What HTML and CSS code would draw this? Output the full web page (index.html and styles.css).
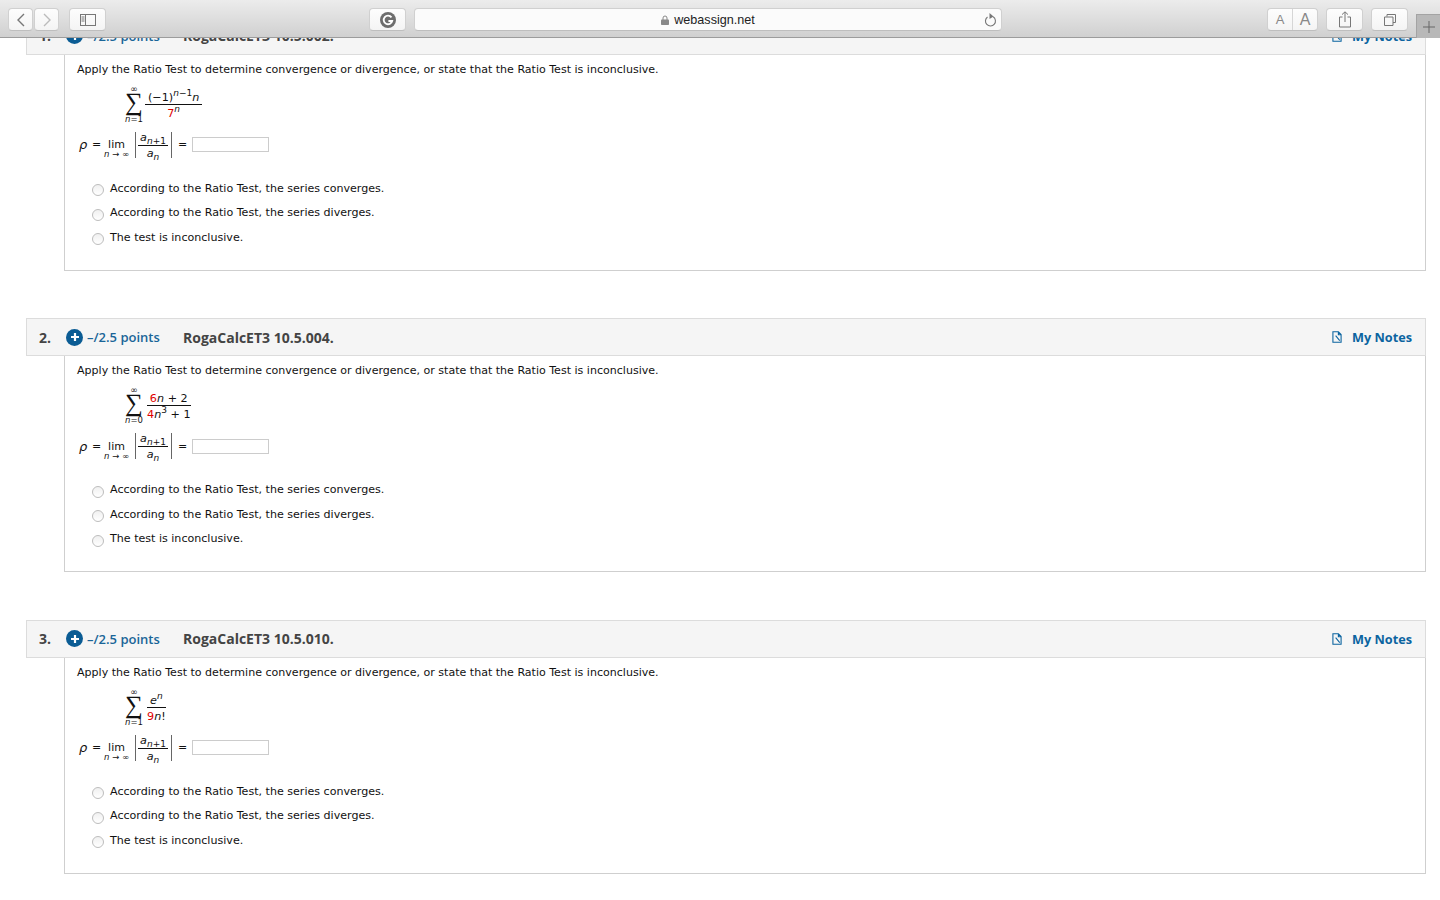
FILE: index.html
```html
<!DOCTYPE html>
<html lang="en">
<head>
<meta charset="utf-8">
<title>webassign.net</title>
<link rel="stylesheet" href="styles.css">
</head>
<body>
<header class="chrome">
  <div class="btn-pair">
    <button class="tb tb-nav"><svg width="10" height="14" viewBox="0 0 10 14"><path d="M8 1 2 7l6 6" fill="none" stroke="#777" stroke-width="1.4"/></svg></button>
    <button class="tb tb-nav"><svg width="10" height="14" viewBox="0 0 10 14"><path d="m2 1 6 6-6 6" fill="none" stroke="#bbb" stroke-width="1.4"/></svg></button>
  </div>
  <button class="tb tb-side"><svg width="16" height="12" viewBox="0 0 16 12"><rect x=".5" y=".5" width="15" height="11" fill="none" stroke="#777"/><path d="M5.5 0v12M1.500 3h3M1.500 5h3M1.500 7h3" stroke="#777" fill="none"/></svg></button>
  <div class="spacer-a"></div>
  <button class="tb tb-side"><svg width="16" height="16" viewBox="0 0 16 16"><circle cx="8" cy="8" r="8" fill="#6d6d6d"/><path d="M11.500 5.400A4.300 4.300 0 1 0 12.200 9H8.400" fill="none" stroke="#fff" stroke-width="1.800"/></svg></button>
  <div class="url">
    <span class="url-center"><svg width="8" height="10" viewBox="0 0 8 10"><path d="M2 5V3a2 2 0 0 1 4 0v2" fill="none" stroke="#888"/><rect y="4.500" width="8" height="5.500" rx=".8" fill="#888"/></svg><span class="url-text">webassign.net</span></span>
    <svg class="reload" width="14" height="14" viewBox="0 0 14 14"><path d="M9.600 3A5 5 0 1 1 4 3.200" transform="translate(.5 .8)" fill="none" stroke="#777" stroke-width="1.100"/><path d="M6.500 0 10.500 3.600 6.500 6z" fill="#777"/></svg>
  </div>
  <div class="spacer-b"></div>
  <div class="font-pair"><span class="font-a">A</span><span class="font-b">A</span></div>
  <button class="tb tb-tool"><svg width="12" height="17" viewBox="0 0 12 17"><path d="M3.500 6H.5v10h11V6h-3M6 11V1M3 3.600 6 .8l3 2.800" fill="none" stroke="#777"/></svg></button>
  <button class="tb tb-tool"><svg width="12" height="12" viewBox="0 0 12 12"><path d="M3 2.500V.5h8.500v8H9M.5 3h8.500v8.500H.5z" fill="none" stroke="#777"/></svg></button>
  <div class="new-tab"><svg width="12" height="12" viewBox="0 0 12 12"><path d="M6 0v12M0 6h12" stroke="#666"/></svg></div>
</header>

<main class="page">
  <section class="question">
    <div class="q-head">
      <span class="q-num">1.</span>
      <span class="plus"><svg width="10" height="10" viewBox="0 0 10 10"><path d="M5 1v8M1 5h8" stroke="#fff" stroke-width="2.200"/></svg></span>
      <span class="q-points">–/2.5 points</span>
      <span class="q-title">RogaCalcET3 10.5.002.</span>
      <span class="notes"><svg width="10" height="12" viewBox="0 0 11 13"><path d="M1 .8h6l3 3v8.400H1zM7 1v3h3M4 5l4.500 5.500" fill="none" stroke="#0b64a0" stroke-width="1.200"/></svg>My Notes</span>
    </div>
    <div class="q-body">
      <p class="prompt">Apply the Ratio Test to determine convergence or divergence, or state that the Ratio Test is inconclusive.</p>
      <div class="series">
        <span class="sum"><span class="lim-top">∞</span><span class="sigma">∑</span><span class="lim-bot"><i>n</i>=1</span></span>
        <span class="frac"><span class="num">(−1)<sup><i>n</i>−1</sup><i>n</i></span><span class="den"><em class="red">7</em><sup><i>n</i></sup></span></span>
      </div>
      <div class="limit">
        <i class="rho">ρ</i><span class="eq">=</span>
        <span class="lim"><span>lim</span><small><i>n</i> → ∞</small></span>
        <span class="abs"><span class="frac frac-r"><span class="num"><i>a</i><sub><i>n</i>+1</sub></span><span class="den"><i>a</i><sub><i>n</i></sub></span></span></span>
        <span class="eq eq-r">=</span>
        <input class="answer" type="text" aria-label="answer">
      </div>
      <label class="choice"><input class="radio" type="radio" name="q1">According to the Ratio Test, the series converges.</label>
      <label class="choice"><input class="radio" type="radio" name="q1">According to the Ratio Test, the series diverges.</label>
      <label class="choice"><input class="radio" type="radio" name="q1">The test is inconclusive.</label>
    </div>
  </section>

  <section class="question">
    <div class="q-head">
      <span class="q-num">2.</span>
      <span class="plus"><svg width="10" height="10" viewBox="0 0 10 10"><path d="M5 1v8M1 5h8" stroke="#fff" stroke-width="2.200"/></svg></span>
      <span class="q-points">–/2.5 points</span>
      <span class="q-title">RogaCalcET3 10.5.004.</span>
      <span class="notes"><svg width="10" height="12" viewBox="0 0 11 13"><path d="M1 .8h6l3 3v8.400H1zM7 1v3h3M4 5l4.500 5.500" fill="none" stroke="#0b64a0" stroke-width="1.200"/></svg>My Notes</span>
    </div>
    <div class="q-body">
      <p class="prompt">Apply the Ratio Test to determine convergence or divergence, or state that the Ratio Test is inconclusive.</p>
      <div class="series">
        <span class="sum"><span class="lim-top">∞</span><span class="sigma">∑</span><span class="lim-bot"><i>n</i>=0</span></span>
        <span class="frac"><span class="num"><em class="red">6</em><i>n</i> + 2</span><span class="den"><em class="red">4</em><i>n</i><sup>3</sup> + 1</span></span>
      </div>
      <div class="limit">
        <i class="rho">ρ</i><span class="eq">=</span>
        <span class="lim"><span>lim</span><small><i>n</i> → ∞</small></span>
        <span class="abs"><span class="frac frac-r"><span class="num"><i>a</i><sub><i>n</i>+1</sub></span><span class="den"><i>a</i><sub><i>n</i></sub></span></span></span>
        <span class="eq eq-r">=</span>
        <input class="answer" type="text" aria-label="answer">
      </div>
      <label class="choice"><input class="radio" type="radio" name="q2">According to the Ratio Test, the series converges.</label>
      <label class="choice"><input class="radio" type="radio" name="q2">According to the Ratio Test, the series diverges.</label>
      <label class="choice"><input class="radio" type="radio" name="q2">The test is inconclusive.</label>
    </div>
  </section>

  <section class="question">
    <div class="q-head">
      <span class="q-num">3.</span>
      <span class="plus"><svg width="10" height="10" viewBox="0 0 10 10"><path d="M5 1v8M1 5h8" stroke="#fff" stroke-width="2.200"/></svg></span>
      <span class="q-points">–/2.5 points</span>
      <span class="q-title">RogaCalcET3 10.5.010.</span>
      <span class="notes"><svg width="10" height="12" viewBox="0 0 11 13"><path d="M1 .8h6l3 3v8.400H1zM7 1v3h3M4 5l4.500 5.500" fill="none" stroke="#0b64a0" stroke-width="1.200"/></svg>My Notes</span>
    </div>
    <div class="q-body">
      <p class="prompt">Apply the Ratio Test to determine convergence or divergence, or state that the Ratio Test is inconclusive.</p>
      <div class="series">
        <span class="sum"><span class="lim-top">∞</span><span class="sigma">∑</span><span class="lim-bot"><i>n</i>=1</span></span>
        <span class="frac"><span class="num"><i>e</i><sup><i>n</i></sup></span><span class="den"><em class="red">9</em><i>n</i>!</span></span>
      </div>
      <div class="limit">
        <i class="rho">ρ</i><span class="eq">=</span>
        <span class="lim"><span>lim</span><small><i>n</i> → ∞</small></span>
        <span class="abs"><span class="frac frac-r"><span class="num"><i>a</i><sub><i>n</i>+1</sub></span><span class="den"><i>a</i><sub><i>n</i></sub></span></span></span>
        <span class="eq eq-r">=</span>
        <input class="answer" type="text" aria-label="answer">
      </div>
      <label class="choice"><input class="radio" type="radio" name="q3">According to the Ratio Test, the series converges.</label>
      <label class="choice"><input class="radio" type="radio" name="q3">According to the Ratio Test, the series diverges.</label>
      <label class="choice"><input class="radio" type="radio" name="q3">The test is inconclusive.</label>
    </div>
  </section>
</main>
</body>
</html>
```
FILE: styles.css
```css
* { box-sizing: border-box; }
html, body { margin: 0; height: 900px; overflow: hidden; background: #fff; }
body { font-family: "DejaVu Sans", Verdana, sans-serif; font-size: 11px; color: #111; }

/* Browser toolbar overlays the scrolled page */
.chrome {
  position: fixed; top: 0; left: 0; right: 0; height: 38px; z-index: 2;
  display: flex; align-items: flex-start; padding: 8px 0 0 8px;
  background: linear-gradient(#ececec, #d0d0d0);
  border-bottom: 1px solid #9c9c9c;
}
.tb {
  height: 23px; padding: 0; display: flex; align-items: center; justify-content: center;
  background: linear-gradient(#fdfdfd, #f4f4f4);
  border: 1px solid #d0d0d0; border-bottom-color: #bebebe; border-radius: 4px;
}
.btn-pair { display: flex; gap: 1px; margin-right: 10px; }
.tb-nav { width: 25px; }
.tb-side { width: 37px; }
.spacer-a { width: 263px; }
.url {
  width: 588px; height: 23px; margin-left: 8px; display: flex; align-items: center; justify-content: center;
  background: #fbfbfb; border: 1px solid #d0d0d0; border-bottom-color: #bebebe; border-radius: 4px;
  position: relative;
}
.url-center { display: flex; align-items: center; gap: 5px; }
.url-text { font: 12.600px "Liberation Sans", Arial, sans-serif; color: #222; }
.reload { position: absolute; right: 4px; top: 4px; }
.spacer-b { width: 265px; }
.font-pair {
  display: flex; width: 51px; height: 23px; margin-right: 8px; color: #888;
  background: linear-gradient(#fdfdfd, #f4f4f4);
  border: 1px solid #d0d0d0; border-bottom-color: #bebebe; border-radius: 4px;
  font-family: "Liberation Sans", Arial, sans-serif;
}
.font-a, .font-b { display: flex; align-items: center; justify-content: center; }
.font-a { width: 25px; font-size: 13px; border-right: 1px solid #d6d6d6; }
.font-b { flex: 1; font-size: 16px; }
.tb-tool { width: 37px; margin-right: 8px; }
.new-tab {
  width: 24px; height: 24px; margin-top: 6px; display: flex; align-items: center; justify-content: center;
  background: #b8b8b8; border: 1px solid #a3a3a3; border-bottom: 0; border-right: 0;
}

/* Assignment page */
.page { padding: 16.5px 14px 0 26px; }
.question { margin-bottom: 47.500px; }
.q-head {
  height: 38px; display: flex; align-items: center; padding: 0 13px 0 12px;
  background: #f5f5f5; border: 1px solid #dcdcdc;
  font-family: "Open Sans", sans-serif;
}
.q-num { width: 27px; font-size: 14px; font-weight: 700; color: #444; }
.plus {
  width: 17px; height: 17px; margin-right: 4px; border-radius: 50%; background: #0b5c94;
  display: flex; align-items: center; justify-content: center;
}
.q-points { width: 96px; font-size: 13px; font-weight: 600; color: #1a6598; }
.q-title { font-size: 14px; font-weight: 700; color: #444; }
.notes {
  margin-left: auto; display: flex; align-items: center; gap: 10px;
  font-size: 12.700px; font-weight: 700; color: #0b64a0;
}
.q-body {
  height: 216px; margin-left: 38px; padding: 0 0 0 12px;
  border: 1px solid #cfcfcf; border-top: 0;
}
.prompt { margin: 0; height: 28px; padding-top: 8px; line-height: 14px; font-size: 11.050px; }

.series { display: flex; align-items: flex-start; height: 49px; padding-left: 48px; }
.sum { width: 18px; padding-top: 2px; display: flex; flex-direction: column; align-items: center; }
.lim-top { font-size: 9px; line-height: 8px; }
.lim-bot { font-size: 8.500px; line-height: 8px; white-space: nowrap; }
.sigma { font: 25px/16px "Liberation Serif", serif; margin: 1px 0 5px; }
.frac { display: inline-flex; flex-direction: column; align-items: center; margin-left: 2px; margin-top: 8px; }
.num { padding: 0 3px; line-height: 13px; border-bottom: 1px solid #111; white-space: nowrap; font-size: 11.200px; }
.den { padding: 0 2px; line-height: 18px; white-space: nowrap; font-size: 11.200px; }
.red { color: #e00000; font-style: normal; }
sup, sub { font-size: 9px; line-height: 0; }

.limit { display: flex; align-items: center; height: 26px; padding-left: 2px; }
.rho { width: 13px; font-size: 13px; }
.eq { width: 12px; }
.lim { width: 27px; margin-left: -1px; padding-top: 8px; text-align: center; }
.lim > span { display: block; line-height: 12px; }
.lim small { display: block; font-size: 8.500px; line-height: 7px; white-space: nowrap; margin: 0 -2px; }
.abs {
  display: flex; margin-left: 5px; padding: 0 3px 0 2px; height: 26px; align-items: center;
  border-left: 1px solid #666; border-right: 1px solid #666;
}
.frac-r { margin: 2px 0 0; width: 30px; }
.frac-r .num { padding: 0 2px; line-height: 14px; width: 100%; text-align: center; }
.frac-r .den { line-height: 15px; }
.eq-r { margin-left: 6px; width: 14px; }
.answer { width: 77px; height: 15px; padding: 0; border: 1px solid #ccc; background: #fff; }

.choice { display: flex; align-items: center; height: 24.500px; padding-left: 15px; font-size: 11.080px; }
.limit + .choice { margin-top: 18.700px; }
.radio {
  appearance: none; width: 12px; height: 12px; margin: 4px 6px 0 0; flex: none;
  border: 1px solid #bdbdbd; border-radius: 50%; background: linear-gradient(#f0f0f0, #fff);
}
```
